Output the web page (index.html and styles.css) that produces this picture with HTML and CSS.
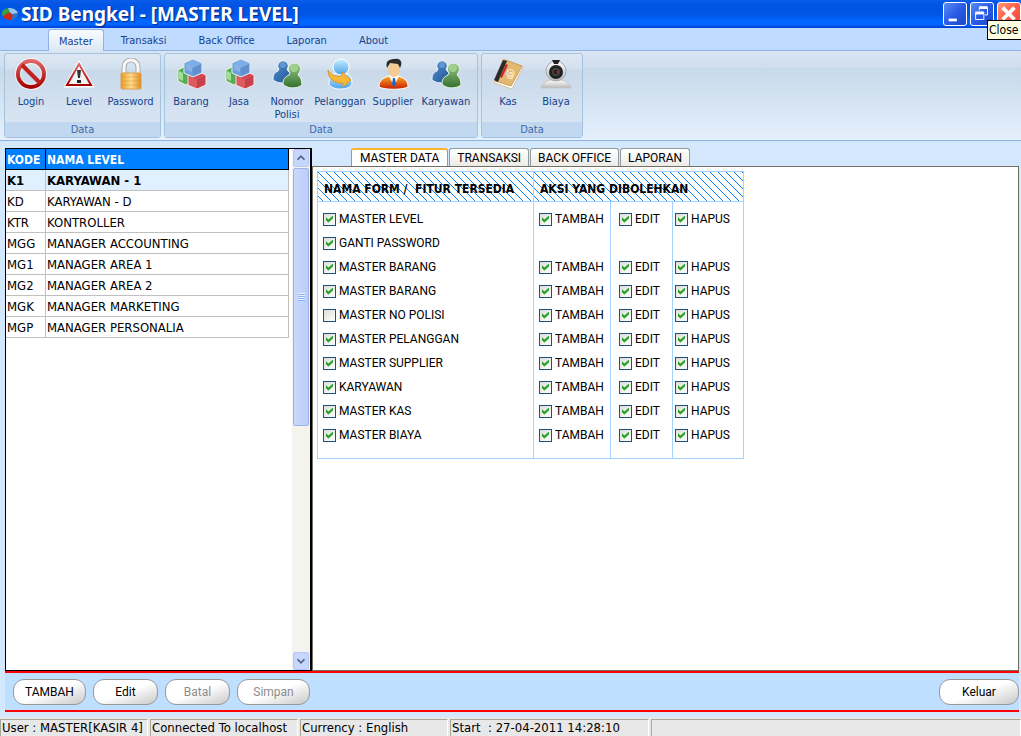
FILE: index.html
```
<!DOCTYPE html>
<html lang="id">
<head>
    <meta charset="UTF-8">
    <meta name="viewport" content="width=device-width, initial-scale=1.0">
    <title>SID Bengkel - [MASTER LEVEL]</title>
    <link rel="stylesheet" href="styles.css">
</head>
<body>
    <!-- Shared icons -->
    <svg class="sprite" aria-hidden="true">
        <defs>
            <linearGradient id="gRed" x1="0" y1="0" x2="0" y2="1"><stop offset="0" stop-color="#e06565"/><stop offset="1" stop-color="#a80000"/></linearGradient>
            <linearGradient id="gGold" x1="0" y1="0" x2="1" y2="0"><stop offset="0" stop-color="#e89a28"/><stop offset=".5" stop-color="#ffdf8c"/><stop offset="1" stop-color="#e08a1c"/></linearGradient>
            <linearGradient id="gBlue" x1="0" y1="0" x2="1" y2="1"><stop offset="0" stop-color="#5590cc"/><stop offset="1" stop-color="#1f5296"/></linearGradient>
            <linearGradient id="gGreen" x1="0" y1="0" x2="0" y2="1"><stop offset="0" stop-color="#9acb86"/><stop offset="1" stop-color="#35702f"/></linearGradient>
            <linearGradient id="gSky" x1="0" y1="0" x2="0" y2="1"><stop offset="0" stop-color="#c8ecff"/><stop offset="1" stop-color="#48a4ea"/></linearGradient>
            <linearGradient id="gShirt" x1="0" y1="0" x2="0" y2="1"><stop offset="0" stop-color="#ffac28"/><stop offset="1" stop-color="#c81c00"/></linearGradient>
            <linearGradient id="gGrey" x1="0" y1="0" x2="0" y2="1"><stop offset="0" stop-color="#ffffff"/><stop offset="1" stop-color="#b8b8b8"/></linearGradient>
            <symbol id="cubes" viewBox="0 0 32 32">
                <path d="M3 12l6-3 8 4v10l-6 4-8-4z" fill="#54ae50" stroke="#e4f2e2"/>
                <path d="M4 13l4 2v8l-4-2z" fill="#a2dc9a"/>
                <path d="M22 13l9 4v10l-9 4-9-4V17z" fill="#d24850" stroke="#f6e2e4"/>
                <path d="M14 18l8 4v8l-8-4z" fill="#de5c5c"/>
                <path d="M22 22l8-4v8l-8 4z" fill="#c4404a"/>
                <path d="M18 1l9 4v10l-9 4-9-4V5z" fill="#6c9edc" stroke="#e0ebfa"/>
                <path d="M10 6l8-4 8 4-8 4z" fill="#80aee6"/>
                <path d="M18 10l8-4v8l-8 4z" fill="#6090d2"/>
                <path d="M11 6l6 3v5l-6-2z" fill="#86b4ea"/>
            </symbol>
            <symbol id="people" viewBox="0 0 32 32">
                <path d="M2 22c0-5 1-7 5-9l1-2a5 5 0 1 1 8 0l1 2c4 2 4 5 4 9-5 4-14 4-19 0z" fill="url(#gBlue)" stroke="#eaf2fa"/>
                <path d="M12 26c0-5 2-7 6-9l1-2a6 6 0 1 1 9 0l-1 2c3 2 4 6 4 10-5 4-15 4-19-1z" fill="url(#gGreen)" stroke="#eaf4ea"/>
                <circle cx="23" cy="10" r="4" fill="#a0cf92"/>
                <circle cx="12" cy="7" r="3" fill="#5f98d4"/>
            </symbol>
        </defs>
    </svg>

    <header class="titlebar">
        <svg class="logo" viewBox="0 0 18 18">
            <path d="M1 9a8 5 0 0 1 8-6l1 6-3 5A7 6 0 0 1 1 9z" fill="#35a048"/>
            <path d="M7 3a9 7 0 0 1 10 5l-6 3z" fill="#94c8ec"/>
            <path d="M11 9l6-1c0 4-3 7-8 7z" fill="#2d75c8"/>
            <path d="M2 12c2-3 5-5 8-4l2 3-2 4c-4 0-6-1-8-3z" fill="#d02818"/>
        </svg>
        <h1>SID Bengkel - [MASTER LEVEL]</h1>
        <div class="window-buttons">
            <button type="button" aria-label="Minimize"><svg viewBox="0 0 24 24"><path d="M5 17h9v3H5z" fill="#fff"/></svg></button>
            <button type="button" aria-label="Restore"><svg viewBox="0 0 24 24" fill="none" stroke="#fff"><path d="M9 8V5h9v8h-3" /><path d="M9 5h9" stroke-width="3"/><path d="M5 10h9v8H5z" stroke-width="1"/><path d="M5 11h9" stroke-width="3"/></svg></button>
            <button type="button" class="close" aria-label="Close"><svg viewBox="0 0 24 24"><path d="M5 5l13 13M18 5L5 18" stroke="#fff" stroke-width="4"/></svg></button>
            <span class="tooltip">Close</span>
        </div>
    </header>

    <nav class="menu">
        <a href="#" class="active">Master</a>
        <a href="#">Transaksi</a>
        <a href="#">Back Office</a>
        <a href="#">Laporan</a>
        <a href="#">About</a>
    </nav>

    <div class="ribbon">
        <section class="group">
            <div class="tools">
                <button type="button">
                    <svg viewBox="0 0 32 32"><circle cx="16" cy="16" r="13" fill="none" stroke="#fff" stroke-width="6" opacity=".6"/><circle cx="16" cy="16" r="13" fill="none" stroke="url(#gRed)" stroke-width="4"/><path d="M7 7l18 18" stroke="#c02020" stroke-width="4"/></svg>
                    Login
                </button>
                <button type="button">
                    <svg viewBox="0 0 32 32"><path d="M16 5L29 28H3z" fill="#fff" stroke="#fff" stroke-width="3"/><path d="M16 6L28 27H4z" fill="#f4f4f4" stroke="url(#gRed)" stroke-width="2"/><path d="M14 12h4l-1 8h-2z" fill="#333"/><path d="M14 22h4v3h-4z" fill="#222"/></svg>
                    Level
                </button>
                <button type="button" class="medium">
                    <svg viewBox="0 0 32 32"><path d="M9 17V9a7 7 0 0 1 14 0v8" fill="none" stroke="#aaa" stroke-width="5"/><path d="M9 17V9a7 7 0 0 1 14 0v8" fill="none" stroke="#f8f8f8" stroke-width="3"/><rect x="6" y="15" width="20" height="16" rx="1" fill="url(#gGold)" stroke="#d8a050"/><path d="M7 19h18M7 23h18M7 27h18" stroke="#d48a28" opacity=".4"/></svg>
                    Password
                </button>
            </div>
            <h2>Data</h2>
        </section>
        <section class="group">
            <div class="tools">
                <button type="button"><svg viewBox="0 0 32 32"><use href="#cubes"/></svg>Barang</button>
                <button type="button"><svg viewBox="0 0 32 32"><use href="#cubes"/></svg>Jasa</button>
                <button type="button"><svg viewBox="0 0 32 32"><use href="#people"/></svg>Nomor Polisi</button>
                <button type="button" class="wide">
                    <svg viewBox="0 0 32 32"><path d="M5 25c0-5 3-9 7-10h10c4 1 6 5 6 10 0 8-23 8-23 0z" fill="url(#gSky)" stroke="#fff"/><circle cx="17" cy="9" r="8" fill="url(#gSky)" stroke="#fff"/><path d="M4 12c3 5 7 7 14 6v-4l9 8-8 7v-4C10 26 4 20 4 12z" fill="#f9b738" stroke="#dd942c"/></svg>
                    Pelanggan
                </button>
                <button type="button">
                    <svg viewBox="0 0 32 32"><path d="M2 29c0-7 4-9 10-11h9c6 2 10 4 10 11-6 3-23 3-29 0z" fill="url(#gShirt)" stroke="#fff"/><path d="M12 18l5 10 5-10-5-2z" fill="#fff"/><path d="M16 20h2l1 6-2 3-2-3z" fill="#1c62c8"/><ellipse cx="17" cy="11" rx="6" ry="8" fill="#f4cb94"/><path d="M10 10c-2-7 2-9 8-9 6-1 8 4 5 9l-2-4-8-1z" fill="#2c2c2c"/></svg>
                    Supplier
                </button>
                <button type="button" class="wide"><svg viewBox="0 0 32 32"><use href="#people"/></svg>Karyawan</button>
            </div>
            <h2>Data</h2>
        </section>
        <section class="group">
            <div class="tools">
                <button type="button">
                    <svg viewBox="0 0 32 32"><path d="M11 1l20 8-11 22L2 25z" fill="#fff" stroke="#d8c09c"/><path d="M13 2l17 6-11 20-16-5z" fill="#e2b970" stroke="#c89c5c"/><path d="M11 2l4 1L6 24l-4-2z" fill="#2b2b2b"/><path d="M14 6L8 19l2 1 6-13z" fill="#d02828"/><text x="14" y="19" class="at">@</text></svg>
                    Kas
                </button>
                <button type="button">
                    <svg viewBox="0 0 32 32"><path d="M1 30c0-4 5-7 9-8h12c4 1 9 4 9 8z" fill="url(#gGrey)" stroke="#c4c4c4"/><circle cx="16" cy="13" r="10" fill="url(#gGrey)" stroke="#a8a8a8"/><path d="M12 2h8l-2 4h-4z" fill="#222"/><circle cx="16" cy="14" r="7" fill="#222"/><circle cx="16" cy="14" r="4" fill="#444"/><circle cx="16" cy="14" r="2" fill="#111"/><circle cx="17" cy="14" r="1" fill="#e02020"/></svg>
                    Biaya
                </button>
            </div>
            <h2>Data</h2>
        </section>
    </div>

    <main class="workspace">
        <div class="level-panel">
            <div class="level-list">
                <table class="level-table">
                    <thead>
                        <tr><th class="kode">KODE</th><th>NAMA LEVEL</th></tr>
                    </thead>
                    <tbody>
                        <tr class="selected"><td>K1</td><td>KARYAWAN - 1</td></tr>
                        <tr><td>KD</td><td>KARYAWAN - D</td></tr>
                        <tr><td>KTR</td><td>KONTROLLER</td></tr>
                        <tr><td>MGG</td><td>MANAGER ACCOUNTING</td></tr>
                        <tr><td>MG1</td><td>MANAGER AREA 1</td></tr>
                        <tr><td>MG2</td><td>MANAGER AREA 2</td></tr>
                        <tr><td>MGK</td><td>MANAGER MARKETING</td></tr>
                        <tr><td>MGP</td><td>MANAGER PERSONALIA</td></tr>
                    </tbody>
                </table>
            </div>
            <div class="scrollbar">
                <button type="button" aria-label="Scroll up"><svg viewBox="0 0 16 16"><path d="M4 10l4-4 4 4" fill="none" stroke="#4d6185" stroke-width="2"/></svg></button>
                <div class="thumb"><span></span></div>
                <div class="track"></div>
                <button type="button" aria-label="Scroll down"><svg viewBox="0 0 16 16"><path d="M4 6l4 4 4-4" fill="none" stroke="#4d6185" stroke-width="2"/></svg></button>
            </div>
        </div>

        <div class="access-panel">
            <div class="tabs">
                <button type="button" class="active">MASTER DATA</button>
                <button type="button">TRANSAKSI</button>
                <button type="button">BACK OFFICE</button>
                <button type="button">LAPORAN</button>
            </div>
            <div class="page">
                <table class="access-table">
                    <colgroup>
                        <col class="form-col">
                        <col class="add-col">
                        <col class="edit-col">
                        <col>
                    </colgroup>
                    <thead>
                        <tr><th>NAMA FORM /&nbsp; FITUR TERSEDIA</th><th colspan="3">AKSI YANG DIBOLEHKAN</th></tr>
                    </thead>
                    <tbody>
                        <tr>
                            <td><label><input type="checkbox" checked>MASTER LEVEL</label></td>
                            <td class="add"><label><input type="checkbox" checked>TAMBAH</label></td>
                            <td class="edit"><label><input type="checkbox" checked>EDIT</label></td>
                            <td class="delete"><label><input type="checkbox" checked>HAPUS</label></td>
                        </tr>
                        <tr>
                            <td><label><input type="checkbox" checked>GANTI PASSWORD</label></td>
                            <td class="add"></td>
                            <td class="edit"></td>
                            <td class="delete"></td>
                        </tr>
                        <tr>
                            <td><label><input type="checkbox" checked>MASTER BARANG</label></td>
                            <td class="add"><label><input type="checkbox" checked>TAMBAH</label></td>
                            <td class="edit"><label><input type="checkbox" checked>EDIT</label></td>
                            <td class="delete"><label><input type="checkbox" checked>HAPUS</label></td>
                        </tr>
                        <tr>
                            <td><label><input type="checkbox" checked>MASTER BARANG</label></td>
                            <td class="add"><label><input type="checkbox" checked>TAMBAH</label></td>
                            <td class="edit"><label><input type="checkbox" checked>EDIT</label></td>
                            <td class="delete"><label><input type="checkbox" checked>HAPUS</label></td>
                        </tr>
                        <tr>
                            <td><label><input type="checkbox">MASTER NO POLISI</label></td>
                            <td class="add"><label><input type="checkbox" checked>TAMBAH</label></td>
                            <td class="edit"><label><input type="checkbox" checked>EDIT</label></td>
                            <td class="delete"><label><input type="checkbox" checked>HAPUS</label></td>
                        </tr>
                        <tr>
                            <td><label><input type="checkbox" checked>MASTER PELANGGAN</label></td>
                            <td class="add"><label><input type="checkbox" checked>TAMBAH</label></td>
                            <td class="edit"><label><input type="checkbox" checked>EDIT</label></td>
                            <td class="delete"><label><input type="checkbox" checked>HAPUS</label></td>
                        </tr>
                        <tr>
                            <td><label><input type="checkbox" checked>MASTER SUPPLIER</label></td>
                            <td class="add"><label><input type="checkbox" checked>TAMBAH</label></td>
                            <td class="edit"><label><input type="checkbox" checked>EDIT</label></td>
                            <td class="delete"><label><input type="checkbox" checked>HAPUS</label></td>
                        </tr>
                        <tr>
                            <td><label><input type="checkbox" checked>KARYAWAN</label></td>
                            <td class="add"><label><input type="checkbox" checked>TAMBAH</label></td>
                            <td class="edit"><label><input type="checkbox" checked>EDIT</label></td>
                            <td class="delete"><label><input type="checkbox" checked>HAPUS</label></td>
                        </tr>
                        <tr>
                            <td><label><input type="checkbox" checked>MASTER KAS</label></td>
                            <td class="add"><label><input type="checkbox" checked>TAMBAH</label></td>
                            <td class="edit"><label><input type="checkbox" checked>EDIT</label></td>
                            <td class="delete"><label><input type="checkbox" checked>HAPUS</label></td>
                        </tr>
                        <tr>
                            <td><label><input type="checkbox" checked>MASTER BIAYA</label></td>
                            <td class="add"><label><input type="checkbox" checked>TAMBAH</label></td>
                            <td class="edit"><label><input type="checkbox" checked>EDIT</label></td>
                            <td class="delete"><label><input type="checkbox" checked>HAPUS</label></td>
                        </tr>
                    </tbody>
                </table>
            </div>
        </div>
    </main>

    <div class="actions">
        <button type="button" class="large">TAMBAH</button>
        <button type="button">Edit</button>
        <button type="button" disabled>Batal</button>
        <button type="button" class="large" disabled>Simpan</button>
        <button type="button" class="exit">Keluar</button>
    </div>

    <footer class="statusbar">
        <span>User : MASTER[KASIR 4]</span>
        <span>Connected To localhost</span>
        <span>Currency : English</span>
        <span class="start">Start&nbsp; : 27-04-2011 14:28:10</span>
        <span class="rest"></span>
    </footer>
</body>
</html>
```
FILE: styles.css
```
* {
    box-sizing: border-box;
}

body {
    margin: 0;
    min-height: 100vh;
    display: flex;
    flex-direction: column;
    background-color: #d3e7fd;
    font-family: "DejaVu Sans Condensed", "DejaVu Sans", sans-serif;
    font-size: 12px;
    color: #000;
}

button {
    font-family: inherit;
    font-size: inherit;
    color: inherit;
    padding: 0;
    border: none;
    background: none;
}

table {
    border-collapse: separate;
    border-spacing: 0;
}

.sprite {
    position: absolute;
    width: 0;
    height: 0;
}

/* Title bar */
.titlebar {
    display: flex;
    align-items: center;
    height: 28px;
    padding-left: 1px;
    background: linear-gradient(#0a5ce8 0, #0054e3 20%, #0055e5 50%, #0066ff 75%, #0066ff 88%, #003dd0 100%);
}

.titlebar h1 {
    flex: 1;
    margin: 0 0 0 2px;
    font-family: "Noto Sans", sans-serif;
    font-size: 19px;
    line-height: 26px;
    font-weight: bold;
    color: #fff;
    text-shadow: 1px 1px 1px #0a2a80;
}

.logo {
    width: 18px;
    height: 18px;
}

.window-buttons {
    position: relative;
    display: flex;
    gap: 3px;
}

.window-buttons button {
    width: 24px;
    height: 24px;
    border: 1px solid #fff;
    border-radius: 3px;
    background: linear-gradient(135deg, #5c8cf4, #2a5be8 50%, #1c48c8);
}

.window-buttons .close {
    background: linear-gradient(135deg, #ff9878, #ff5c48 50%, #f04838);
}

.window-buttons svg {
    display: block;
    width: 22px;
    height: 22px;
}

.tooltip {
    position: absolute;
    top: 18px;
    right: 0;
    width: 34px;
    height: 20px;
    padding-left: 1px;
    border: 1px solid #000;
    border-right: none;
    background-color: #ffffe1;
    font-size: 12px;
    line-height: 18px;
}

/* Menu tabs */
.menu {
    display: flex;
    height: 23px;
    padding: 1px 0 0 48px;
    background-color: #bfdbff;
    border-bottom: 1px solid #8db2e3;
    font-size: 11px;
}

.menu a {
    height: 22px;
    padding: 0 16px;
    line-height: 23px;
    color: #15428b;
    text-decoration: none;
}

.menu .active {
    margin-right: 1px;
    padding: 0 10px;
    border: 1px solid #8db2e3;
    border-bottom: none;
    border-radius: 3px 3px 0 0;
    background: linear-gradient(#f8fbff, #dde8f5);
}

/* Ribbon */
.ribbon {
    display: flex;
    gap: 3px;
    height: 90px;
    padding: 2px 4px;
    background: linear-gradient(#dae5f3 0, #d0deee 18%, #c8d9ea 20%, #e4f0fc 100%);
    border-bottom: 1px solid #8db2e3;
}

.group {
    display: flex;
    flex-direction: column;
    height: 85px;
    border: 1px solid #a5c3df;
    border-radius: 3px;
    background: linear-gradient(#dee8f4 0, #d2e0ee 18%, #c9d9ea 20%, #dbe8f5 100%);
    color: #15428b;
    font-size: 11px;
}

.tools {
    display: flex;
    flex: 1;
    padding: 4px 2px 0;
}

.tools button {
    display: flex;
    flex-direction: column;
    align-items: center;
    width: 48px;
    line-height: 13px;
}

.tools .medium {
    width: 55px;
}

.tools .wide {
    width: 58px;
}

.tools svg {
    width: 32px;
    height: 32px;
    margin-bottom: 5px;
}

.at {
    font-size: 10px;
    fill: #fff;
}

.group h2 {
    margin: 0;
    height: 15px;
    background-color: #c1d8f0;
    color: #3e6aaa;
    font-size: 11px;
    line-height: 15px;
    font-weight: normal;
    text-align: center;
}

/* Level list */
.workspace {
    flex: 1;
    display: flex;
    padding: 7px 2px 0 5px;
}

.level-panel {
    display: flex;
    width: 307px;
    border: 1px solid #000;
    border-right-width: 2px;
    background-color: #fff;
}

.level-list {
    flex: 1;
}

.level-table {
    width: 283px;
    table-layout: fixed;
}

.level-table th,
.level-table td {
    height: 21px;
    padding: 2px 0 0 1px;
    border-right: 1px solid #c0c0c0;
    border-bottom: 1px solid #c0c0c0;
    line-height: 18px;
    text-align: left;
}

.level-table td {
    font-size: 13px;
}

.level-table th {
    border-color: #000;
    background-color: #0080ff;
    color: #fff;
}

.kode {
    width: 40px;
}

.level-table .selected td {
    background-color: #e0f0ff;
    font-weight: bold;
}

.scrollbar {
    display: flex;
    flex-direction: column;
    width: 18px;
    padding: 0 1px;
    background-color: #f4f3ee;
}

.scrollbar button {
    height: 18px;
    border: 1px solid #b4c8f6;
    border-radius: 2px;
    background-color: #c6d6fc;
}

.scrollbar svg {
    display: block;
    width: 14px;
    height: 16px;
}

.thumb {
    display: flex;
    align-items: center;
    justify-content: center;
    flex: 257;
    margin-top: 1px;
    border: 1px solid #98b4e8;
    border-radius: 2px;
    background: linear-gradient(90deg, #cad8fd, #bccdf8);
}

.thumb span {
    width: 7px;
    height: 8px;
    background: repeating-linear-gradient(#eef4ff 0 1px, #8cb0f8 1px 2px);
}

.track {
    flex: 226;
}

/* Access rights */
.access-panel {
    flex: 1;
    display: flex;
    flex-direction: column;
    font-family: Roboto, sans-serif;
}

.tabs {
    display: flex;
    gap: 1px;
    height: 18px;
    padding-left: 39px;
}

.tabs button {
    height: 18px;
    padding: 0 7px;
    border: 1px solid #919b9c;
    border-bottom: none;
    border-radius: 3px 3px 0 0;
    background: linear-gradient(#fff, #ecebe6);
    line-height: 16px;
}

.tabs .active {
    padding: 0 8px;
    border-top: 2px solid #ffb42c;
    background: #fff;
}

.page {
    flex: 1;
    padding: 4px;
    border: 1px solid #716f64;
    background-color: #fff;
}

.access-table {
    width: 427px;
    table-layout: fixed;
    border: 1px solid #a6d2ff;
}

.access-table th {
    height: 30px;
    padding: 4px 0 0 6px;
    border-right: 1px solid #a6d2ff;
    border-bottom: 1px solid #a6d2ff;
    background: linear-gradient(45deg, transparent 47%, #0080ff 47%, #0080ff 53%, transparent 53%) 0 0 / 8px 8px;
    font-family: "DejaVu Sans Condensed", sans-serif;
    text-align: left;
}

.form-col {
    width: 216px;
}

.add-col {
    width: 77px;
}

.edit-col {
    width: 62px;
}

.access-table td {
    height: 24px;
    padding: 0 0 0 5px;
    border-right: 1px solid #a6d2ff;
}

.access-table .edit {
    padding-left: 8px;
}

.access-table .delete {
    padding-left: 2px;
}

.access-table th:last-child,
.access-table td:last-child {
    border-right: none;
}

.access-table tbody tr:first-child td {
    height: 29px;
    padding-top: 5px;
}

.access-table tbody tr:last-child td {
    height: 35px;
    padding-bottom: 11px;
}

.access-table label {
    display: flex;
    align-items: center;
    gap: 3px;
}

.access-table input {
    appearance: none;
    display: grid;
    place-items: center;
    width: 13px;
    height: 13px;
    margin: 0;
    border: 1px solid #1c5180;
    background: linear-gradient(135deg, #dcdcd7, #fff);
}

.access-table input:checked::before {
    content: "";
    width: 7px;
    height: 7px;
    background-color: #21a121;
    clip-path: polygon(0 28%, 36% 58%, 100% 0, 100% 40%, 36% 100%, 0 68%);
}

/* Bottom buttons */
.actions {
    display: flex;
    align-items: center;
    gap: 7px;
    height: 41px;
    margin: 0 2px 5px 5px;
    padding: 0 0 0 8px;
    border-top: 2px solid #f00;
    border-bottom: 2px solid #f00;
    background-color: #bedfff;
    font-family: Roboto, sans-serif;
}

.actions button {
    width: 65px;
    height: 26px;
    border: 1px solid #999;
    border-radius: 11px;
    background: linear-gradient(160deg, #fff 50%, #c8c8c8);
}

.actions .large {
    width: 73px;
}

.actions button:disabled {
    color: #8c8c8c;
}

.actions .exit {
    width: 80px;
    margin-left: auto;
}

/* Status bar */
.statusbar {
    display: flex;
    gap: 2px;
    height: 19px;
    padding-top: 2px;
    background-color: #e8e8e8;
    font-size: 13px;
}

.statusbar span {
    width: 148px;
    height: 17px;
    padding-left: 1px;
    border-top: 1px solid #aca899;
    border-left: 1px solid #aca899;
    border-right: 1px solid #fff;
    line-height: 16px;
    white-space: nowrap;
}

.statusbar .start {
    width: 199px;
}

.statusbar .rest {
    flex: 1;
}
```
